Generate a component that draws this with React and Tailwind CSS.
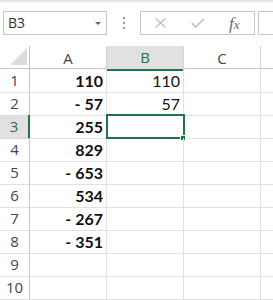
import React from 'react';

const rows = [
  { n: 1, a: '110', b: '110' },
  { n: 2, a: '- 57', b: '57' },
  { n: 3, a: '255', b: '' },
  { n: 4, a: '829', b: '' },
  { n: 5, a: '- 653', b: '' },
  { n: 6, a: '534', b: '' },
  { n: 7, a: '- 267', b: '' },
  { n: 8, a: '- 351', b: '' },
  { n: 9, a: '', b: '' },
  { n: 10, a: '', b: '' },
];

const cols = ['A', 'B', 'C'];

function Toolbar() {
  return (
    <div className="flex items-center h-[24px] mt-[8px] pl-[3px] font-['Open_Sans',sans-serif]">
      {/* Name box */}
      <div className="flex items-center justify-between w-[104px] h-[24px] border border-[#c6c6c6] pl-[4px] pr-[5px]">
        <span className="text-[14px] text-[#333] leading-none">B3</span>
        <span className="w-0 h-0 border-l-[3px] border-r-[3px] border-t-[3px] border-l-transparent border-r-transparent border-t-[#666]" />
      </div>
      {/* Grip dots */}
      <div className="flex flex-col gap-[3px] w-[33px] items-center">
        <span className="w-[2px] h-[2px] bg-[#9a9a9a]" />
        <span className="w-[2px] h-[2px] bg-[#9a9a9a]" />
        <span className="w-[2px] h-[2px] bg-[#9a9a9a]" />
      </div>
      {/* Formula buttons */}
      <div className="flex items-center w-[115px] h-[24px] border border-[#c6c6c6] shrink-0">
        <svg width="11" height="10" viewBox="0 0 11 10" className="ml-[14px]">
          <path d="M0.5 0.5 L10.5 9.5 M10.5 0.5 L0.5 9.5" stroke="#bcbcbc" strokeWidth="1.3" fill="none" />
        </svg>
        <svg width="14" height="10" viewBox="0 0 14 10" className="ml-[25px]">
          <path d="M0.8 5.2 L4.6 9 L13.2 0.8" stroke="#c4c4c4" strokeWidth="1.8" fill="none" />
        </svg>
        <span className="ml-[24px] italic text-[#6a6a6a] leading-none font-['Liberation_Serif',serif]">
          <span className="text-[17px]">f</span>
          <span className="text-[13px]">x</span>
        </span>
      </div>
      {/* Formula input */}
      <div className="ml-[3px] flex-1 h-[24px] border-t border-b border-l border-[#c6c6c6]" />
    </div>
  );
}

function Header() {
  return (
    <div className="grid grid-cols-[30px_77px_77px_77px_1fr] h-[23px] mt-[11px] border-b border-[#c6c6c6] font-['Open_Sans',sans-serif]">
      <div className="relative border-r border-[#c6c6c6]">
        <div className="absolute left-[10px] top-[2px] w-0 h-0 border-l-[17px] border-b-[17px] border-l-transparent border-b-[#dcdcdc]" />
      </div>
      {cols.map((c) => (
        <div
          key={c}
          className={
            c === 'B'
              ? 'flex items-center justify-center bg-[#e1e1e1] border-r border-[#d4d4d4] text-[#217346] text-[15px] border-b-2 border-b-[#217346] -mb-[1px]'
              : 'flex items-center justify-center border-r border-[#d4d4d4] text-[#444] text-[15px]'
          }
        >
          {c}
        </div>
      ))}
      <div />
    </div>
  );
}

function Row({ r }) {
  const sel = r.n === 3;
  return (
    <div className="grid grid-cols-[30px_77px_77px_77px_1fr] h-[23px]">
      <div
        className={
          sel
            ? "flex items-center justify-center bg-[#e1e1e1] text-[#217346] text-[15px] font-['Open_Sans',sans-serif] border-b border-[#d4d4d4] border-r-2 border-r-[#217346]"
            : "flex items-center justify-center text-[#444] text-[15px] font-['Open_Sans',sans-serif] border-b border-[#e1e1e1] border-r border-r-[#c6c6c6]"
        }
      >
        {r.n}
      </div>
      <div className="flex items-end justify-end pr-[3px] pb-[2px] border-b border-r border-[#e1e1e1] font-bold text-[16px] text-[#111] leading-[18px]">
        {r.a}
      </div>
      <div className="relative flex items-end justify-end pr-[3px] pb-[2px] border-b border-r border-[#e1e1e1] text-[16px] text-[#111] leading-[18px]">
        {r.b}
        {sel && (
          <>
            <div className="absolute -left-[1px] -top-[1px] w-[79px] h-[25px] border-2 border-[#217346]" />
            <div className="absolute -right-[3px] -bottom-[3px] w-[6px] h-[6px] bg-[#217346] border border-white" />
          </>
        )}
      </div>
      <div className="border-b border-r border-[#e1e1e1]" />
      <div className="border-b border-[#e1e1e1]" />
    </div>
  );
}

export default function App() {
  return (
    <div className="w-[273px] h-[300px] overflow-hidden bg-white font-['Lato','Open_Sans',sans-serif]">
      <div className="h-[3px] bg-gradient-to-b from-[#d9d9d9] to-white" />
      <Toolbar />
      <Header />
      {rows.map((r) => (
        <Row key={r.n} r={r} />
      ))}
    </div>
  );
}
